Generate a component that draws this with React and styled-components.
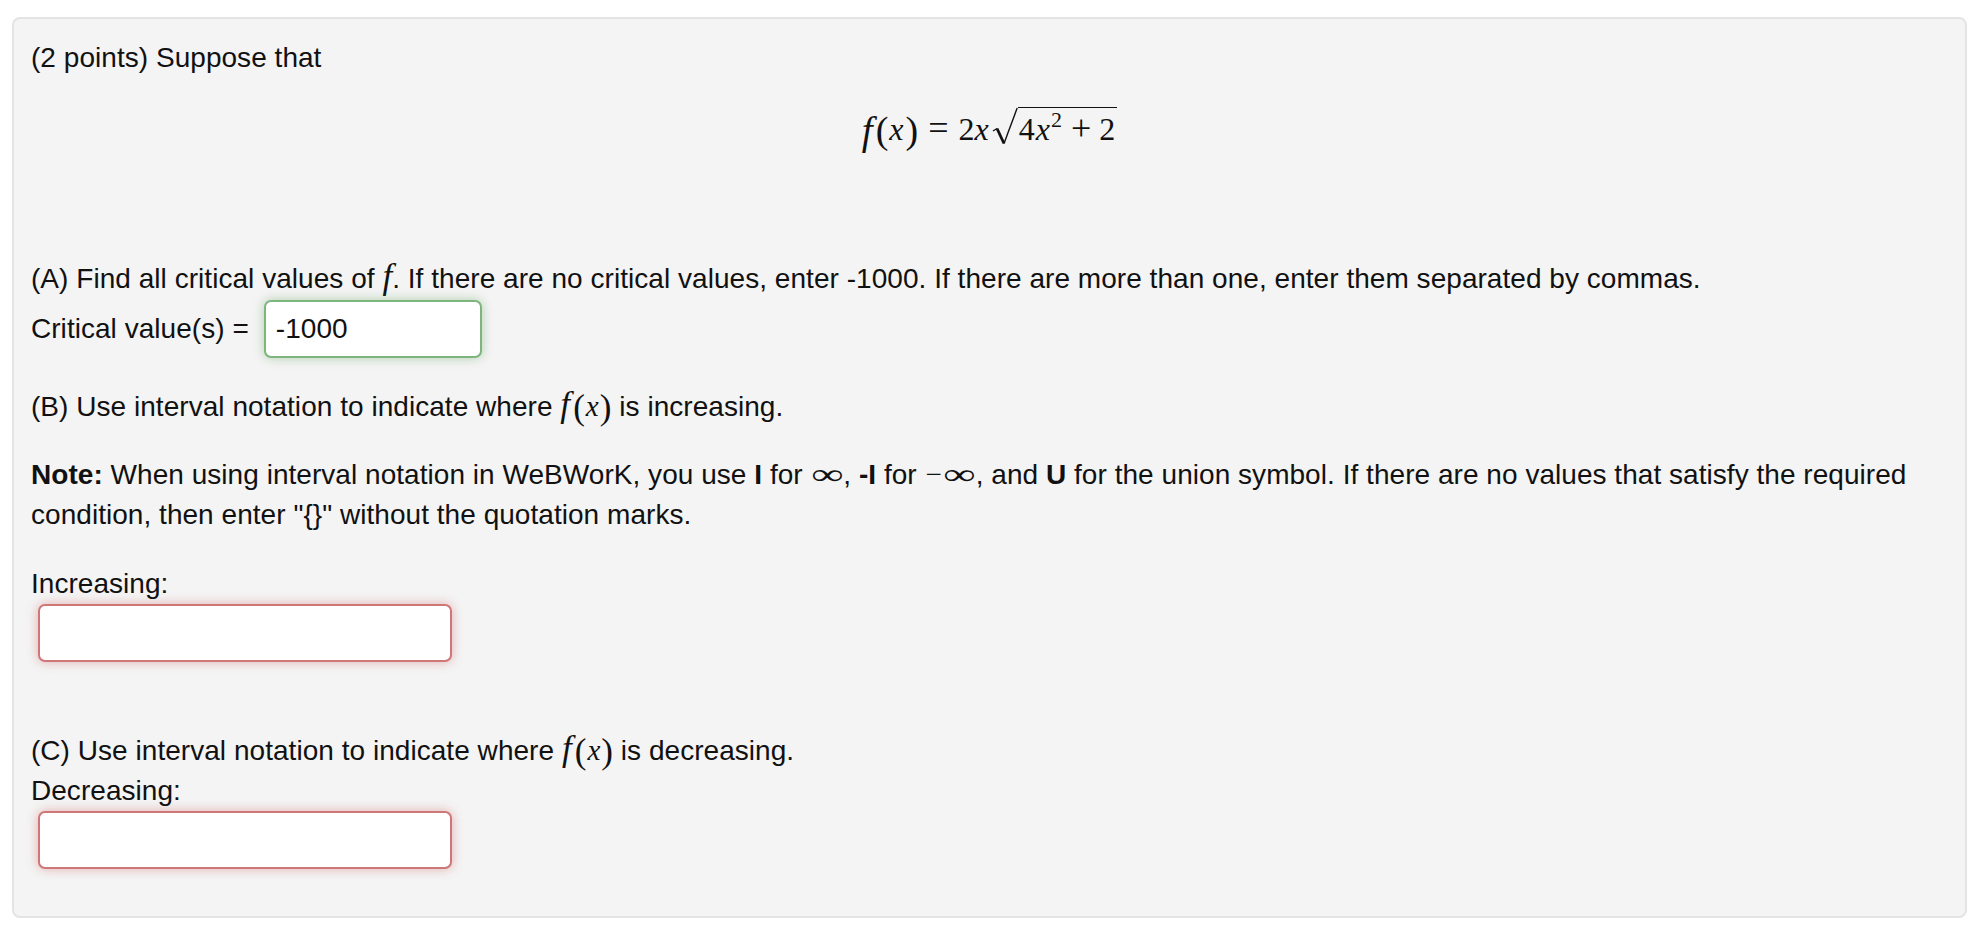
import styled, { createGlobalStyle } from 'styled-components';

const GlobalStyle = createGlobalStyle`
  html, body {
    margin: 0;
    padding: 0;
    background: #ffffff;
  }

  body {
    font-family: "Liberation Sans", Arial, sans-serif;
    font-size: 28px;
    line-height: 40px;
    letter-spacing: 0.04px;
    color: #111111;
  }
`;

const Well = styled.div`
  box-sizing: border-box;
  width: 1955px;
  margin: 17px 0 14px 12px;
  padding: 19px 17px 47px 17px;

  background: #f4f4f4;
  border: 2px solid #e4e4e4;
  border-radius: 8px;
`;

const Line = styled.div`
  margin-top: ${({ $top }) => $top || 0}px;
`;

const FormulaRow = styled.div`
  height: 40px;
  margin-top: 29px;
  text-align: center;
  font-family: "Liberation Serif", "Times New Roman", serif;
  font-size: 32px;
  line-height: 40px;
  letter-spacing: 0;
`;

const Mi = styled.span`
  font-family: "Liberation Serif", "Times New Roman", serif;
  font-style: italic;
  font-size: ${({ $size }) => $size || 29}px;
  line-height: 0;
  margin: 0 ${({ $right }) => $right || 0}px 0 ${({ $left }) => $left || 0}px;
  vertical-align: ${({ $drop }) => ($drop ? `-${$drop}px` : 'baseline')};
`;

const Mo = styled.span`
  font-family: "Liberation Serif", "Times New Roman", serif;
  font-size: ${({ $size }) => $size || 29}px;
  line-height: 0;
  margin: 0 ${({ $right }) => $right || 0}px 0 ${({ $left }) => $left || 0}px;
  vertical-align: ${({ $drop }) => ($drop ? `-${$drop}px` : 'baseline')};
`;

const Inf = styled.span`
  display: inline-block;
  margin: 0 6px;
  font-family: "Liberation Serif", "Times New Roman", serif;
  font-size: 29px;
  line-height: 20px;
  transform: scaleX(1.55);
`;

const Sup = styled.span`
  font-family: "Liberation Serif", "Times New Roman", serif;
  font-size: 22px;
  line-height: 0;
  vertical-align: 13px;
  margin: 0 9px 0 1px;
`;

const Radical = styled.svg`
  width: 26px;
  height: 38px;
  vertical-align: -5px;
`;

const Radicand = styled.span`
  display: inline-block;
  line-height: 30px;
  padding: 6px 2px 0 1px;
  border-top: 1.6px solid #111111;
`;

const InputRow = styled.div`
  margin-top: ${({ $top }) => $top || 0}px;
  display: flex;
  align-items: center;
  height: 58px;
`;

const Label = styled.span`
  margin-right: 15px;
`;

const AnswerBox = styled.div`
  box-sizing: border-box;
  width: ${({ $width }) => $width}px;
  height: 58px;
  margin-left: ${({ $left }) => $left || 0}px;
  padding: 0 10px;

  display: flex;
  align-items: center;

  background: #ffffff;
  border: 2px solid ${({ $state }) => ($state === 'correct' ? '#7db57d' : '#cf7676')};
  border-radius: 7px;
  box-shadow: 0 0 11px
    ${({ $state }) =>
      $state === 'correct' ? 'rgba(90, 160, 90, 0.45)' : 'rgba(205, 90, 90, 0.45)'};

  font-size: 28px;
  color: #111111;
`;

// inline f(x) the way MathJax draws it: tall f and parentheses
const Fx = () => (
  <>
    <Mi $size={35} $right={3}>f</Mi>
    <Mo $size={35} $drop={3}>(</Mo>
    <Mi $left={1} $right={1}>x</Mi>
    <Mo $size={35} $drop={3}>)</Mo>
  </>
);

const Sqrt = ({ children }) => (
  <>
    <Radical viewBox="0 0 26 38">
      <path d="M1 24 L5 21.5" fill="none" stroke="#111" strokeWidth="1.3" />
      <path d="M5 21.5 L12 36.5" fill="none" stroke="#111" strokeWidth="2.8" />
      <path d="M12 36.5 L25.2 1" fill="none" stroke="#111" strokeWidth="1.4" />
    </Radical>
    <Radicand>{children}</Radicand>
  </>
);

const App = () => {
  return (
    <>
      <GlobalStyle />
      <Well>
        <Line>(2 points) Suppose that</Line>

        <FormulaRow>
          <Mi $size={39} $right={3} $drop={4}>f</Mi>
          <Mo $size={38} $drop={3}>(</Mo>
          <Mi $size={32} $left={1} $right={2}>x</Mi>
          <Mo $size={38} $drop={3}>)</Mo>
          <Mo $size={36} $left={10} $right={10}>=</Mo>
          <Mo $size={32}>2</Mo>
          <Mi $size={32} $right={3}>x</Mi>
          <Sqrt>
            <Mo $size={32}>4</Mo>
            <Mi $size={32} $left={1}>x</Mi>
            <Sup>2</Sup>
            <Mo $size={36} $right={8}>+</Mo>
            <Mo $size={32}>2</Mo>
          </Sqrt>
        </FormulaRow>

        <Line $top={112}>
          (A) Find all critical values of <Mi $size={35}>f</Mi>. If there are no critical values,
          enter -1000. If there are more than one, enter them separated by commas.
        </Line>
        <InputRow $top={1}>
          <Label>Critical value(s) =</Label>
          <AnswerBox $width={218} $state="correct">
            -1000
          </AnswerBox>
        </InputRow>

        <Line $top={29}>
          (B) Use interval notation to indicate where <Fx /> is increasing.
        </Line>

        <Line $top={28}>
          <b>Note:</b> When using interval notation in WeBWorK, you use <b>I</b> for <Inf>∞</Inf>,{' '}
          <b>-I</b> for <Mo $left={1} $right={1}>−</Mo>
          <Inf>∞</Inf>, and <b>U</b> for the union symbol. If there are no values that satisfy the
          required condition, then enter "{'{}'}" without the quotation marks.
        </Line>

        <Line $top={29}>Increasing:</Line>
        <AnswerBox $width={414} $left={7} $state="wrong" />

        <Line $top={69}>
          (C) Use interval notation to indicate where <Fx /> is decreasing.
        </Line>
        <Line>Decreasing:</Line>
        <AnswerBox $width={414} $left={7} $state="wrong" />
      </Well>
    </>
  );
};

export default App;
